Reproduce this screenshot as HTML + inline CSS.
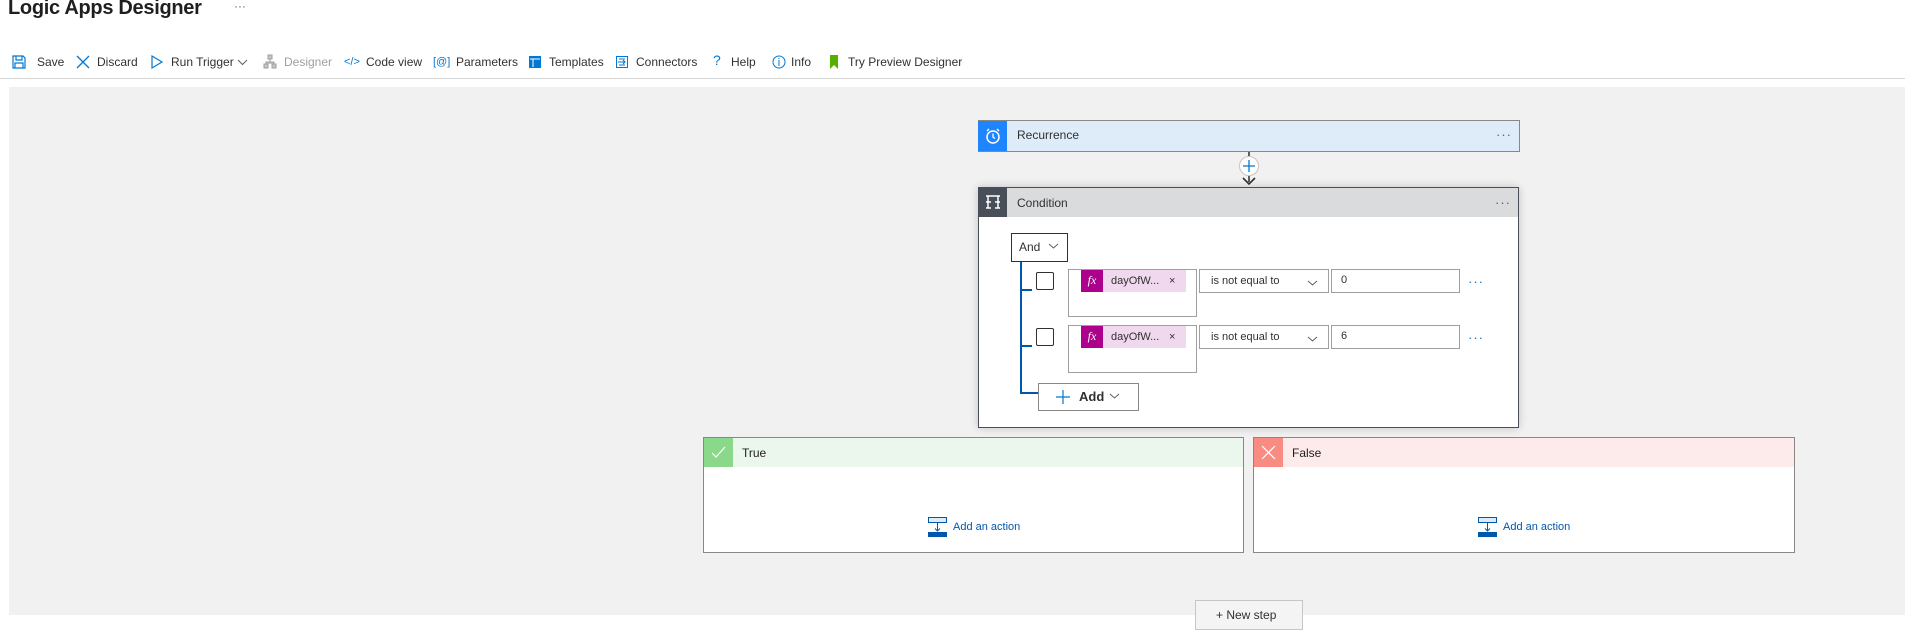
<!DOCTYPE html>
<html><head><meta charset="utf-8"><style>
*{box-sizing:border-box;margin:0;padding:0}
body{width:1905px;height:615px;overflow:hidden;background:#fff;font-family:"Liberation Sans",sans-serif;position:relative;color:#323130}
.a{position:absolute}
.tb{position:absolute;top:55px;font-size:12px;color:#323130;line-height:14px}
.ti{position:absolute;top:54px}
.card{position:absolute;background:#fff;border:1px solid #8a8886}
.dots{position:absolute;color:#605e5c;font-size:13px;letter-spacing:1px}
.sm{font-size:11px}
</style></head><body>
<div class="a" style="left:8px;top:-3px;font-size:20px;font-weight:bold;color:#201f1e;letter-spacing:-0.3px">Logic Apps Designer</div>
<div class="a" style="left:234px;top:-1px;font-size:12px;color:#605e5c">···</div>

<!-- toolbar -->
<svg class="ti" style="left:11px" width="16" height="16" viewBox="0 0 16 16"><path d="M2 2h10l2 2v10H2z M5 2v4h6V2 M4 14V9h8v5" fill="none" stroke="#0078d4" stroke-width="1.2"/></svg>
<div class="tb" style="left:37px">Save</div>
<svg class="ti" style="left:75px" width="16" height="16" viewBox="0 0 16 16"><path d="M2 2L14 14M14 2L2 14" stroke="#0078d4" stroke-width="1.3"/></svg>
<div class="tb" style="left:97px">Discard</div>
<svg class="ti" style="left:150px" width="14" height="16" viewBox="0 0 14 16"><path d="M2 2L12 8L2 14z" fill="none" stroke="#0078d4" stroke-width="1.2"/></svg>
<div class="tb" style="left:171px">Run Trigger</div>
<svg class="ti" style="left:237px;top:57px" width="11" height="10" viewBox="0 0 11 10"><path d="M1 3l4.5 4.5L10 3" fill="none" stroke="#605e5c"/></svg>
<svg class="ti" style="left:263px" width="14" height="16" viewBox="0 0 14 16"><path d="M5 1h4v4H5zM1 10h4v4H1zM9 10h4v4H9zM7 5v3M3 10V8h8v2" fill="#c8c6c4" stroke="#a19f9d"/></svg>
<div class="tb" style="left:284px;color:#a19f9d">Designer</div>
<div class="tb" style="left:344px;color:#0078d4;font-size:11px">&lt;/&gt;</div>
<div class="tb" style="left:366px">Code view</div>
<div class="tb" style="left:433px;color:#0078d4;font-size:11px">[@]</div>
<div class="tb" style="left:456px">Parameters</div>
<svg class="ti" style="left:528px" width="14" height="16" viewBox="0 0 14 16"><rect x="1" y="2" width="12" height="12" fill="#0078d4"/><path d="M2 5h10M5 5v8" stroke="#fff"/></svg>
<div class="tb" style="left:549px">Templates</div>
<svg class="ti" style="left:615px" width="14" height="16" viewBox="0 0 14 16"><rect x="1.5" y="2.5" width="11" height="11" fill="none" stroke="#0078d4"/><path d="M3 8h7M8 6l2 2-2 2M4 5h6M4 11h6" fill="none" stroke="#0078d4"/></svg>
<div class="tb" style="left:636px">Connectors</div>
<div class="tb" style="left:713px;color:#0078d4;font-size:14px;top:53px">?</div>
<div class="tb" style="left:731px">Help</div>
<svg class="ti" style="left:772px" width="14" height="16" viewBox="0 0 14 16"><circle cx="7" cy="8" r="6" fill="none" stroke="#0078d4"/><path d="M7 6v6M7 4v1" stroke="#0078d4"/></svg>
<div class="tb" style="left:791px">Info</div>
<svg class="ti" style="left:828px" width="12" height="16" viewBox="0 0 12 16"><path d="M2 1h8v14l-4-4-4 4z" fill="#57b000"/></svg>
<div class="tb" style="left:848px">Try Preview Designer</div>
<div class="a" style="left:0;top:78px;width:1905px;height:1px;background:#d6d6d6"></div>

<!-- canvas -->
<div class="a" style="left:9px;top:87px;width:1896px;height:528px;background:#f1f1f1"></div>

<!-- recurrence -->
<div class="a" style="left:978px;top:120px;width:542px;height:32px;background:#deecf9;border:1px solid #8a8886"></div>
<div class="a" style="left:978px;top:121px;width:29px;height:30px;background:#1f85ff"></div>
<svg class="a" style="left:984px;top:127px" width="18" height="18" viewBox="0 0 18 18"><circle cx="9" cy="10" r="6" fill="none" stroke="#fff" stroke-width="1.5"/><path d="M9 6.5V10l2 1.5M3 4l2-2M15 4l-2-2" fill="none" stroke="#fff" stroke-width="1.3"/></svg>
<div class="a" style="left:1017px;top:128px;font-size:12px;color:#323130">Recurrence</div>
<div class="dots" style="left:1496px;top:127px">···</div>

<!-- connector -->
<div class="a" style="left:1248px;top:152px;width:2px;height:30px;background:#605e5c"></div>
<div class="a" style="left:1239px;top:156px;width:20px;height:20px;border-radius:50%;background:#fff;border:1px solid #c8c6c4"></div>
<svg class="a" style="left:1241px;top:158px" width="16" height="16" viewBox="0 0 16 16"><path d="M8 2v12M2 8h12" stroke="#0078d4" stroke-width="1.3"/></svg>
<svg class="a" style="left:1241px;top:175px" width="16" height="12" viewBox="0 0 16 12"><path d="M2 3l6 6 6-6" fill="none" stroke="#323130" stroke-width="1.6"/></svg>

<!-- condition -->
<div class="a" style="left:978px;top:187px;width:541px;height:241px;background:#fff;border:1px solid #484f58;box-shadow:0 0 8px rgba(0,0,0,0.2)"></div>
<div class="a" style="left:979px;top:188px;width:539px;height:29px;background:#dadbdc"></div>
<div class="a" style="left:979px;top:188px;width:28px;height:29px;background:#484f58"></div>
<svg class="a" style="left:985px;top:194px" width="16" height="16" viewBox="0 0 16 16"><path d="M1 2h14M3 2v6M13 2v6M1 8h5M10 8h5M3 8v6M13 8v6M1 14h5M10 14h5" fill="none" stroke="#fff" stroke-width="1.5"/></svg>
<div class="a" style="left:1017px;top:196px;font-size:12px;color:#323130">Condition</div>
<div class="dots" style="left:1495px;top:195px">···</div>

<div class="a" style="left:1011px;top:233px;width:57px;height:29px;border:1px solid #323130;background:#fff"></div>
<div class="a" style="left:1019px;top:240px;font-size:12px">And</div>
<svg class="a" style="left:1048px;top:242px" width="11" height="8" viewBox="0 0 11 8"><path d="M1 2l4.5 4L10 2" fill="none" stroke="#605e5c"/></svg>
<div class="a" style="left:1020px;top:262px;width:2px;height:131px;background:#0058ad"></div>
<div class="a" style="left:1020px;top:289px;width:12px;height:2px;background:#0058ad"></div>
<div class="a" style="left:1020px;top:345px;width:12px;height:2px;background:#0058ad"></div>
<div class="a" style="left:1020px;top:392px;width:18px;height:2px;background:#0058ad"></div>

<!-- row 1 -->
<div class="a" style="left:1036px;top:272px;width:18px;height:18px;border:1px solid #323130;border-radius:2px"></div>
<div class="a" style="left:1068px;top:269px;width:129px;height:48px;border:1px solid #a19f9d;background:#fff"></div>
<div class="a" style="left:1081px;top:270px;width:105px;height:22px;background:#f0d9ee"></div>
<div class="a" style="left:1081px;top:270px;width:22px;height:22px;background:#ad008c;color:#fff;font-family:'Liberation Serif',serif;font-style:italic;font-size:12px;text-align:center;line-height:21px">fx</div>
<div class="a sm" style="left:1111px;top:275px">dayOfW...</div>
<div class="a sm" style="left:1169px;top:275px">×</div>
<div class="a" style="left:1199px;top:269px;width:130px;height:24px;border:1px solid #a19f9d;background:#fff"></div>
<div class="a sm" style="left:1211px;top:275px">is not equal to</div>
<svg class="a" style="left:1307px;top:279px" width="11" height="8" viewBox="0 0 11 8"><path d="M1 2l4.5 4L10 2" fill="none" stroke="#605e5c"/></svg>
<div class="a" style="left:1331px;top:269px;width:129px;height:24px;border:1px solid #a19f9d;background:#fff"></div>
<div class="a sm" style="left:1341px;top:274px">0</div>
<div class="dots" style="left:1468px;top:274px;color:#0078d4">···</div>

<!-- row 2 -->
<div class="a" style="left:1036px;top:328px;width:18px;height:18px;border:1px solid #323130;border-radius:2px"></div>
<div class="a" style="left:1068px;top:325px;width:129px;height:48px;border:1px solid #a19f9d;background:#fff"></div>
<div class="a" style="left:1081px;top:326px;width:105px;height:22px;background:#f0d9ee"></div>
<div class="a" style="left:1081px;top:326px;width:22px;height:22px;background:#ad008c;color:#fff;font-family:'Liberation Serif',serif;font-style:italic;font-size:12px;text-align:center;line-height:21px">fx</div>
<div class="a sm" style="left:1111px;top:331px">dayOfW...</div>
<div class="a sm" style="left:1169px;top:331px">×</div>
<div class="a" style="left:1199px;top:325px;width:130px;height:24px;border:1px solid #a19f9d;background:#fff"></div>
<div class="a sm" style="left:1211px;top:331px">is not equal to</div>
<svg class="a" style="left:1307px;top:335px" width="11" height="8" viewBox="0 0 11 8"><path d="M1 2l4.5 4L10 2" fill="none" stroke="#605e5c"/></svg>
<div class="a" style="left:1331px;top:325px;width:129px;height:24px;border:1px solid #a19f9d;background:#fff"></div>
<div class="a sm" style="left:1341px;top:330px">6</div>
<div class="dots" style="left:1468px;top:330px;color:#0078d4">···</div>

<!-- add -->
<div class="a" style="left:1038px;top:383px;width:101px;height:28px;border:1px solid #8a8886;background:#fff"></div>
<svg class="a" style="left:1055px;top:389px" width="16" height="16" viewBox="0 0 16 16"><path d="M8 1v14M1 8h14" stroke="#0078d4" stroke-width="1.2"/></svg>
<div class="a" style="left:1079px;top:389px;font-size:13px;font-weight:bold;color:#323130">Add</div>
<svg class="a" style="left:1109px;top:392px" width="11" height="8" viewBox="0 0 11 8"><path d="M1 2l4.5 4L10 2" fill="none" stroke="#605e5c"/></svg>

<!-- true -->
<div class="card" style="left:703px;top:437px;width:541px;height:116px"></div>
<div class="a" style="left:704px;top:438px;width:539px;height:29px;background:#ebf6ec"></div>
<div class="a" style="left:704px;top:438px;width:29px;height:29px;background:#8ad98a"></div>
<svg class="a" style="left:710px;top:444px" width="17" height="17" viewBox="0 0 17 17"><path d="M2 9l4 4L15 3" fill="none" stroke="#fff" stroke-width="1.2"/></svg>
<div class="a" style="left:742px;top:446px;font-size:12px;color:#201f1e">True</div>
<svg class="a" style="left:928px;top:517px" width="19" height="20" viewBox="0 0 19 20"><rect x="0.5" y="0.5" width="18" height="5" fill="#deecf9" stroke="#0058ad"/><path d="M9.5 6v8M7 11.5l2.5 2.5 2.5-2.5" fill="none" stroke="#0058ad"/><rect x="0" y="15" width="19" height="5" fill="#0058ad"/></svg>
<div class="a" style="left:953px;top:521px;font-size:11px;color:#0058ad">Add an action</div>

<!-- false -->
<div class="card" style="left:1253px;top:437px;width:542px;height:116px"></div>
<div class="a" style="left:1254px;top:438px;width:540px;height:29px;background:#fdeaea"></div>
<div class="a" style="left:1254px;top:438px;width:29px;height:29px;background:#f88b82"></div>
<svg class="a" style="left:1261px;top:445px" width="15" height="15" viewBox="0 0 15 15"><path d="M1 1l13 13M14 1L1 14" stroke="#fff" stroke-width="1.2"/></svg>
<div class="a" style="left:1292px;top:446px;font-size:12px;color:#201f1e">False</div>
<svg class="a" style="left:1478px;top:517px" width="19" height="20" viewBox="0 0 19 20"><rect x="0.5" y="0.5" width="18" height="5" fill="#deecf9" stroke="#0058ad"/><path d="M9.5 6v8M7 11.5l2.5 2.5 2.5-2.5" fill="none" stroke="#0058ad"/><rect x="0" y="15" width="19" height="5" fill="#0058ad"/></svg>
<div class="a" style="left:1503px;top:521px;font-size:11px;color:#0058ad">Add an action</div>

<!-- new step -->
<div class="a" style="left:1195px;top:600px;width:108px;height:30px;border:1px solid #c8c6c4;background:#f4f4f4"></div>
<div class="a" style="left:1216px;top:608px;font-size:12px;color:#323130">+ New step</div>
</body></html>
